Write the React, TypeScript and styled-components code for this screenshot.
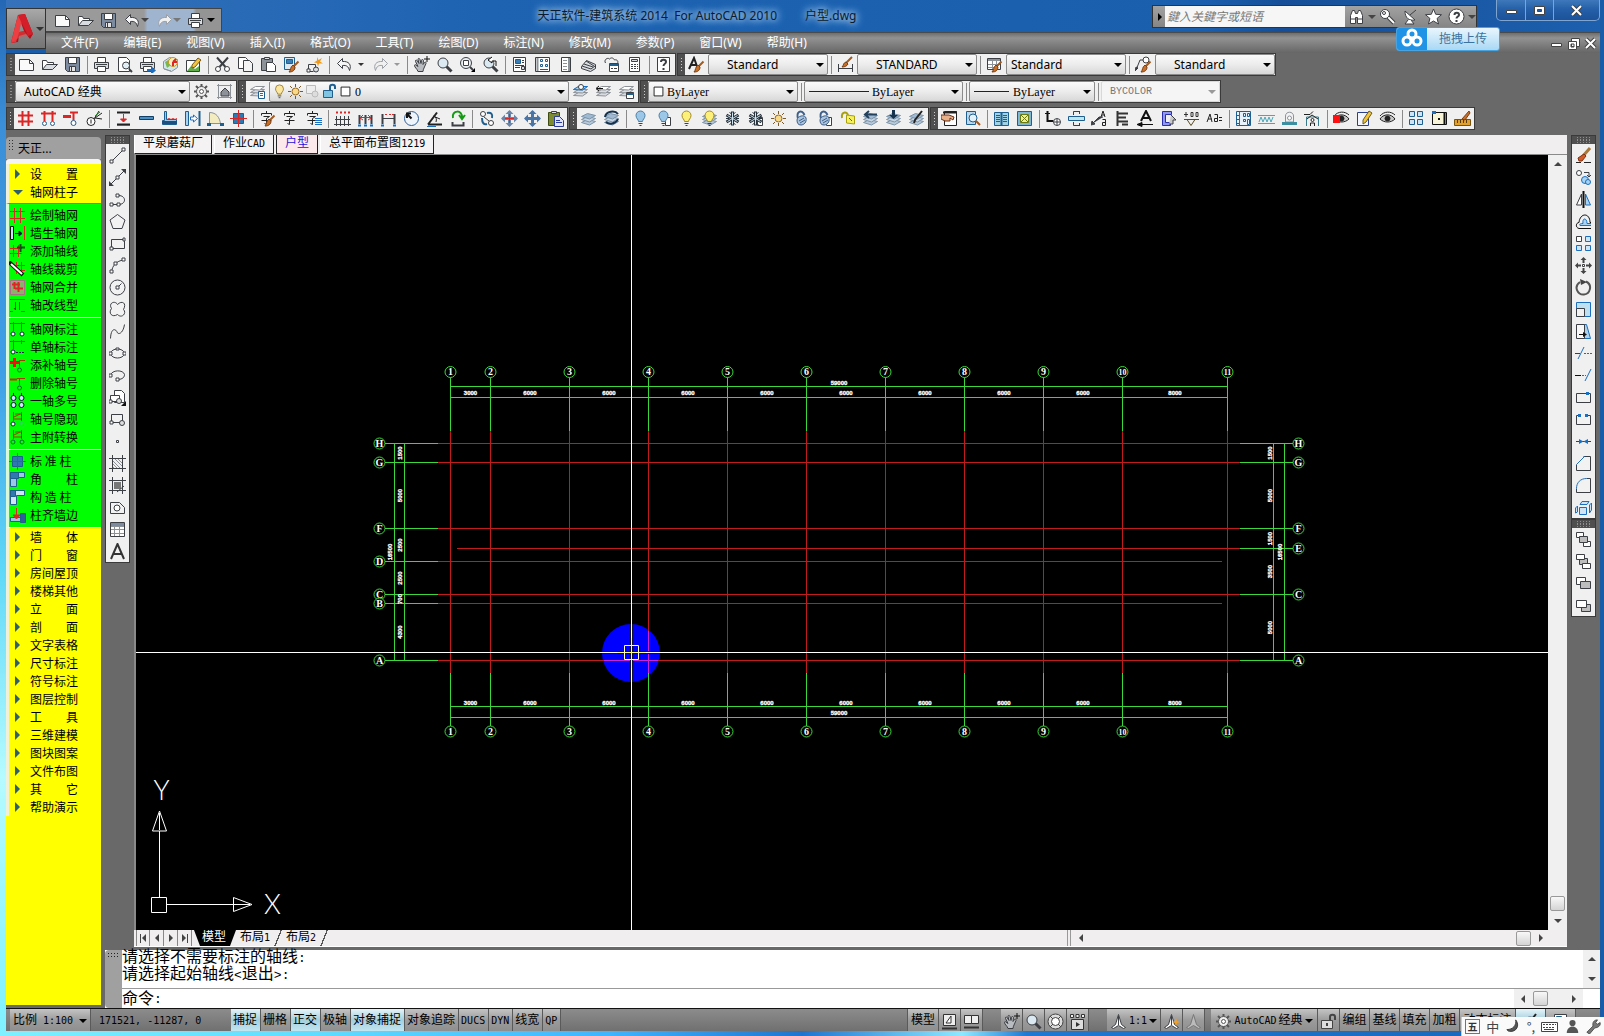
import React from 'react';
import styled, { createGlobalStyle, css } from 'styled-components';

const UI = '"Noto Sans", "Noto Sans CJK SC", sans-serif';
const SONG = '"Liberation Mono", "Noto Sans CJK SC", monospace';

const Global = createGlobalStyle`
  * { box-sizing: border-box; }
  html, body { margin: 0; height: 100%; background: #1a5aa6; }
  #root { height: 100%; }
  button, input, select { font: inherit; color: inherit; border: 0; padding: 0; margin: 0; background: none; border-radius: 0; outline: none; }
  svg { display: block; flex: none; }
`;

/* ---------- icon drawing ---------- */

type Layer = [d: string, stroke?: string, fill?: string, width?: number];

const k = '#3c3f44';
const b = '#1c6fc0';
const lb = '#a9d3f0';
const r = '#dc2626';
const g = '#159a15';
const y = '#f2c53d';
const o = '#c8702a';
const m = '#8d9299';
const w = '#ffffff';
const n = 'none';
const nav = '#1f5f8f';
const lt = '#d9dde2';

const C = (x: number, cy: number, q: number) => `M${x - q} ${cy}a${q} ${q} 0 1 0 ${2 * q} 0a${q} ${q} 0 1 0 ${-2 * q} 0z`;
const Q = (x: number, ry: number, wd: number, h: number) => `M${x} ${ry}h${wd}v${h}h${-wd}z`;

const brush: Layer[] = [['M15.5 5.5l-5 5', '#a05a20', n, 2], ['M10 9l2 2c0 3-2 5-6 5 2-2 1-5 4-7z', '#7a3f12', o]];
const layers: Layer[] = [
  ['M1.5 12.5l5-3h9l-5 3.5z', m, lt],
  ['M1.5 9.5l5-3h9l-5 3.5z', m, lt],
  ['M1.5 6.5l5-3h9l-5 3.5z', m, w],
];
const blueLayers: Layer[] = [
  ['M1.5 12.5l6-3 8 2-6 3.5z', '#7c93a8', '#b9cbdb'],
  ['M1.5 9.5l6-3 8 2-6 3.5z', '#7c93a8', '#c6d6e4'],
  ['M1.5 6.5l6-3 8 2-6 3.5z', '#7c93a8', '#9fbad2'],
];
const printer: Layer[] = [['M4.5 6.5v-5h8v5', k, w], ['M1.5 6.5h14v6h-14z', k, lt], [Q(4.5, 10.5, 8, 5), k, w], ['M3 8.5h11', k]];
const bulb = (f: string, s: string): Layer[] => [['M6.5 11.5c0-2-2.500-3-2.500-6a4.500 4.500 0 0 1 9 0c0 3-2.500 4-2.500 6z', s, f], ['M6.500 13.500h4M7.500 15.500h2', k]];
const flake: Layer[] = [['M8.500 1.500v14M2.500 5l12 7M14.500 5l-12 7', '#27323d', n, 3], ['M5.500 2.500l3 2 3-2M5.500 14.500l3-2 3 2M2 8.500h3M12 8.500h3', '#27323d'], ['M8.500 2.500v12M3.500 5.500l10 6M13.500 5.500l-10 6', '#cfe6f2']];
const sun: Layer[] = [[C(8.5, 8.5, 3.500), '#9a6a20', '#f7d98a'], ['M8.500 1v3M8.500 13v3M1 8.500h3M13 8.500h3M3 3l2 2M12 12l2 2M14 3l-2 2M5 12l-2 2', '#7a5a2a']];
const lock = (f: string): Layer[] => [['M5.500 10C2 1 9-1 11.500 5', '#3e5f8a', n, 2], ['M4 10c0-4 8-6 9-2 1 4-2 7-5 7s-4-2-4-5z', '#3e5f8a', f], ['M6 11l5-3M7 13l5-3', '#3e5f8a']];
const sheet: Layer[] = [[Q(10.5, 7.5, 5, 8), k, w]];
const axisCol: Layer[] = [[Q(3.5, 3.5, 10, 10), nav, '#2f78b0'], ['M8.500 0v17M0 8.500h17', r]];
const grid: Layer[] = [['M5.500 1v15M11.500 1v15M1 5.500h15M1 11.500h15', r, n, 2]];
const move = (c: string): Layer[] => [['M8.500 1.500v14M1.500 8.500h14', c, n, 3], ['M8.500 0l4 4h-8zM8.500 17l4-4h-8zM0 8.500l4-4v8zM17 8.500l-4-4v8z', n, c]];
const zi: Layer[] = [['M7.500 1v2M2.500 5.500v-2h10v2M4.500 6.500h6l-3 2v6l-2-1M2.500 10.500h10', '#222']];
const hand: Layer[] = [['M5 15.500c-1-3-3.500-4-3.500-6 0-1 1-1 1.500-.5l2 1.500-2.500-5c-.5-1.500 1-2 1.500-1l2 3-1-4c0-1.500 1.500-1.500 2 0l1 4 .5-3c0-1.500 2-1 2 0l-.5 4 1.500-2c1-1 2 0 1.500 1l-2 4.500c-.5 1.500-1 2-1 3.500z', k, '#b9bcc0'], ['M14 0v6M11 3h6', '#111']];
const lens: Layer[] = [['M10.500 10.500l5 5', k, n, 3], [C(7, 7, 5), k, '#dbe9f2']];
const gear: Layer[] = [['M8.500 1v3M8.500 13v3M1 8.500h3M13 8.500h3M3 3l2 2M12 12l2 2M14 3l-2 2M5 12l-2 2', '#555', n, 2], [C(8.5, 8.5, 5), '#555', '#eee'], [C(8.5, 8.5, 2), '#555', w]];
const person: Layer[] = [['M8.500 1.500l3 10 4 3-2 1-5-3-5 3-2-1 4-3z', k, w], ['M8.500 3v9', k]];
const eye: Layer[] = [['M1 9c3-5 11-6 15 0-4 4-11 4-15 0z', '#222', '#c9c9c9'], [C(8.5, 8.5, 2.500), '#222', '#222'], ['M1 6c4-5 11-5 15-1', '#222']];

const ICONS: Record<string, Layer[]> = {
  new: [['M1.500 3.500h10l4 4v7h-14z', k, '#fafafa'], ['M11.500 3.500v4h4', k]],
  open: [['M1.500 13.500v-9h4l1 2h6v2', k, w], ['M1.500 13.500l4-5h11l-5 5z', k, lt]],
  save: [['M1.500 1.500h14v14h-12l-2-2z', k, '#7d8ba0'], [Q(4.5, 1.500, 8, 6), k, w], [Q(5.5, 10.5, 6, 5), k, '#e6e6e6'], ['M7.500 11v4', k]],
  print: printer,
  preview: [['M2.500 1.500h8l3 3v11h-11z', k, w], ['M13 13l3 3', k, n, 2], [C(10, 9.5, 3.500), k, '#e3eef5']],
  publish: [...printer, ['M8 13h4v-3l5 4.500-5 4v-3H8z', n, b]],
  globe: [['M1.500 5.500l6-4 8 2v8l-6 4-8-3z', m, '#cfe6ee'], ['M3 6l5-3 1 6-4 3z', n, '#78b84f'], [C(11, 6, 4.5), '#c9951c', '#f8efc5'], ['M11 6l3-3M11 6h4M11 6v4', r, n, 2], ['M2 13l7 2', m]],
  markup: [[Q(1.5, 4.5, 13, 11), k, w], ['M2 15l4-5 4 3 4-3v5z', n, '#5fae4a'], ['M7 9l6-7 3 2-6 7-3 1z', '#7a5a1a', y]],
  cut: [['M3 1.500l8.500 9.500M14 1.500L5.500 11', k, n, 2], [C(4, 13, 2.500), k, w], [C(13, 13, 2.500), k, w]],
  copy: [['M1.500 1.500h7l2 2v9h-9z', k, w], ['M6.500 4.500h6l3 3v8h-9z', k, '#f4f4f4']],
  paste: [[Q(1.5, 2.5, 11, 12), k, '#8d9299'], [Q(4.5, 1.500, 5, 2), k, lt], ['M6.500 6.500h6l3 3v6h-9z', k, w]],
  match: [[Q(1.5, 1.500, 10, 12), nav, '#dce8f2'], [Q(3.5, 3.5, 6, 4), nav, '#3b7db5'], ...brush],
  blockEdit: [['M2.500 8.500h7v4M2.500 8.500v7h5', k], [C(10, 13.5, 2.500), k, lt], [Q(1, 13, 3, 3), k, w], ['M11 1l1.500 3L16 2l-2 3.500 3 2h-4l-1 3-1-3.500-3-.5 3-2z', n, '#f09a1a']],
  undo: [['M6.500 2.500l-5 5 5 5v-3c4-.5 6 1 7 5 2.500-6-1-9.500-7-9z', k, '#f6f6f6']],
  redo: [['M10.500 2.500l5 5-5 5v-3c-4-.5-6 1-7 5-2.500-6 1-9.500 7-9z', '#9aa0a6', '#f0f0f0']],
  pan: hand,
  zoom: lens,
  zoomWin: [[C(7, 7, 5.500), k, '#e9eef2'], [Q(4.5, 4.5, 5, 5), k, w], ['M11 11l3 3', k, n, 2], ['M16 12v4h-4z', n, '#000']],
  zoomPrev: [...lens, ['M10 1l-4 3 4 3v-2h4v5', '#111', w]],
  props: [[Q(2.5, 1.500, 12, 14), k, w], [Q(4.5, 3.5, 5, 4), nav, '#3b7db5'], ['M11 4.500h2M11 6.500h2M4 9.500h9M4 11.500h5', k], [Q(10.500, 10.5, 3, 3), k, lt]],
  design: [[Q(1.5, 1.500, 14, 14), k, w], ['M3.500 2v13', m, n, 2], ['M6.500 3.500h2v2h-2zM11.500 3.500h2v2h-2zM6.500 8.500h2v2h-2zM11.500 8.500h2v2h-2zM6 13.500h8', nav]],
  toolPal: [[Q(4.5, 1.500, 9, 14), k, w], ['M12 2v13', m, n, 2], ['M6 4.500h4M6 7.500h4M6 10.500h4M6 13.500h4', m]],
  sheetSet: [['M1.500 10.500l5-6 9 4v4l-5 3-9-3z', k, lt], ['M2 10l9 3 4-3M4 8l9 3M6 5l8 5', k]],
  markupSet: [['M2.500 7c-2-3 2-6 4-4 2-2 4-1 5 1 3-1 4 2 3 3', k], [Q(6.5, 7.5, 9, 8), k, w], ['M6.500 9h9', nav, n, 2], ['M8 12.500h2M11 12.500h3', k]],
  calc: [[Q(3.5, 1.500, 10, 14), k, w], [Q(5.5, 3.5, 6, 2), k, lt], ['M5 8.500h2M8 8.500h2M11 8.500h1M5 10.500h2M8 10.500h2M11 10.500h1M5 12.500h2M8 12.500h2M11 12.500h1', k]],
  help: [[Q(2.5, 1.500, 12, 14), k, w], ['M6 6c0-3 5-3 5 0 0 2-2.500 1.500-2.500 4M8.500 12v2', k, n, 2]],
  textStyle: [['M1 13L6 2l4 11M3 9h6', '#222', n, 2], ...brush],
  dimStyle: [['M1.500 8v8M15.500 8v8M2 12.500h13', k], ['M15 1l-6 6', '#a05a20', n, 2], ['M9 6l2 2c-1 2-3 3-6 3 2-2 1-4 4-5z', '#7a3f12', o]],
  tableStyle: [[Q(1.5, 2.5, 13, 11), k, w], ['M2 4h12', m, n, 2], ['M2 8.500h12M2 11.500h8M6.500 5v8M10.500 5v8', m], ...brush],
  leaderStyle: [['M1 14l4-10h4', k], ['M0 15l1-4 2 1z', k, k], [C(11, 4, 3), k, w], ...brush],
  gear,
  wsSettings: [['M2.500 1v15M14.500 1v15M1 2.500h15M1 14.500h15', m], ['M5 13V9l4-4 4 4v4z', k, m]],
  layerProps: [...layers, [Q(9.5, 8.5, 6, 7), nav, w], ['M11 10.500h3M11 12.500h3', b]],
  layerCur: [...layers, ['M1.500 6.500l5-3h9l-5 3.500z', b, lb], [C(9, 4, 2.500), k, w]],
  layerPrev: [...layers, ['M8 5.500H2M4 3L1 5.500 4 8', '#111', n]],
  layerState: [...layers, [Q(8.5, 9.5, 7, 6), k, w], ['M9 11h7', nav, n, 2]],
  bulb: bulb('#fbe6a0', '#9a7a2a'),
  sun,
  vpFreeze: [[Q(2.5, 2.5, 9, 8), '#bbb', '#eee'], [C(11, 11, 3), '#bbb', '#ddd']],
  unlock: [['M9 7V4c0-3 5-3 5 0v2', nav, n, 2], [Q(2.5, 7.5, 9, 7), nav, '#7fc4e0']],
  swatch: [[Q(3.5, 3.5, 10, 10), '#111', w]],
  grid,
  axisDim: [['M4.500 1v10M12.500 1v10M1 3.500h15', r, n, 2], [C(4.5, 13.5, 2), nav, w], [C(12.5, 13.5, 2), nav, w]],
  axisDel: [['M0 6.500h8', r, n, 3], ['M7 2.500h8M10.500 2.500v8', r, n, 2], [C(10.5, 13, 2.500), nav, w]],
  axisNo: [[C(5, 11.500, 4), '#222', w], ['M5 9.500v4M9 8l7-5M9 8l7 1M8 9L13 1', '#222'], ['M9 6l5-4', g]],
  wallH: [['M2 2.500h13M2 14.500h13', '#222', n, 2], ['M8.500 4v6M8.500 12l-3-3h6z', r, r], ['M2 15.500h13', b]],
  wallLine: [[Q(1.5, 6.5, 14, 3), '#123f66', '#4a8ec2']],
  wallL: [['M5.500 1.500v8h10v5h-14v-4h2v-9z', nav, '#9cc7e6'], ['M1 12.500h15', '#1f4f7f', n, 3], ['M6 9.500l2-1 2 1 2-1 2 1 2-1', r]],
  wallGap: [[Q(1.5, 1.500, 3, 14), nav, lb], ['M15.500 1v15', nav, n, 2], ['M6.500 7h3V5l4 3.500-4 3.500v-2h-3z', b, w]],
  door: [['M2.500 13.500v-11c7 0 10 5 11 11z', m, '#f2ecc0'], ['M0 14.500h4M13 14.500h4', nav, n, 3]],
  column: axisCol,
  ziBrush: [...zi, ...brush],
  zi,
  ziLines: [...zi, ['M10 8.500h7M10 10.500h7M10 12.500h7M10 14.500h7', b]],
  dim1: [['M2.500 6v10M6.500 6v10M10.500 6v10M14.500 6v10M1 9.500h15M0 14.500h17', k], ['M2 2.500h2M6 2.500h2M10 2.500h2M14 2.500h2', r, n, 2]],
  dim2: [['M2.500 5v9M8.500 5v9M14.500 5v9', k, n, 2], ['M4 7.500h9M11 5l3 3-3 2M6 5L3 8l3 2', r], ['M1 15.500h3M7 15.500h3M13 15.500h3', b, n, 2]],
  dim3: [['M2.500 4v10M14.500 4v10', k, n, 2], ['M5 4.500h2M9 4.500h2M12 4.500h2', r], ['M2 8.500h13', k], ['M1 15.500h3M13 15.500h3', b, n, 2]],
  radius: [[C(8.5, 8.5, 7), '#2f5f96', '#eef4fa'], ['M8.500 8.500l-4-4M8 3.500H4V8', '#111', n, 2]],
  angle: [['M2 14.500h14M2 14.500L11 2.500', '#222', n, 2], ['M7 6l7 3M10 12c1-3 0-5-2-6', '#222'], ['M1 16.500h9', b]],
  arcDim: [['M2.500 15.500h13M3.500 12v4M14.500 12v4', k, n, 2], ['M4 8c-2-8 10-9 9 0M10 5l3 4 3-4', g, n, 2]],
  replace: [[C(5, 4, 2.500), k, w], [C(13, 13, 2.500), k, w], ['M9 3c4-1 6 1 5 5M4 8c0 5 2 7 5 6', nav, n, 2], ['M6 7l5 4', k]],
  moveRed: [...move('#6b86a8'), ['M4 8.500h9M8.500 4v9', r]],
  moveBlue: move('#4a74a4'),
  pasteBlue: [[Q(1.5, 2.5, 11, 13), '#3f4a14', '#7c8a30'], [Q(4.5, 1.500, 5, 2), k, lt], ['M7.500 6.500h5l4 4v6h-9z', '#2a3a9a', '#dfe4fb'], ['M9 10.500h4M9 12.500h6', '#2a3a9a']],
  lay: blueLayers,
  layCycle: [...blueLayers, ['M2 7c1-6 10-7 13-3M15 9c-2 5-9 6-12 3', '#16324d', n, 2]],
  bulbOff: bulb('#9cc7e6', '#4a7fa6'),
  bulbSheet: [...sheet, ...bulb('#9cc7e6', '#4a7fa6')],
  bulbOn: bulb('#fdf07a', '#a58a20'),
  bulbAll: [...blueLayers, ...bulb('#fdf07a', '#a58a20')],
  flake,
  flakeSheet: [...sheet, ...flake],
  lockB: lock('#a9c4dc'),
  lockSheet: [...sheet, ...lock('#a9c4dc')],
  lockY: [['M3 8C2 1 9 1 9 6', '#a8a010', n, 2], ['M7.500 5l8 1v8l-8-1z', '#a8a010', '#f5f060'], ['M10 8l3 3', '#6a6410']],
  layPrev: [...blueLayers, ['M15 4.500H4M7 1L3 4.500 7 8', '#23405c', n, 2]],
  layDown: [...blueLayers, ['M8.500 0v5', '#16324d', n, 3], ['M8.500 9L4 5h9z', n, '#16324d']],
  layEdit: [...blueLayers, ['M14 1L7 10l-1 3', '#222', y, 2]],
  handCard: [[Q(3.5, 1.500, 12, 14), '#222', w], ['M2 2.500h14', '#222', n, 2], ['M0 5h8l5 2-1 3-3-2v3H4L0 9z', '#6b2c10', '#e8b088']],
  findDoc: [['M2.500 1.500h9v13h-9z', nav, '#bcd6ea'], [C(9, 8, 4), nav, '#e3f1fa'], ['M12 11l4 4', '#a05a20', n, 2]],
  win1: [[Q(1.5, 2.5, 14, 13), nav, '#9fd2e4'], ['M8.500 2v14', nav, n, 2], ['M3 5.500h4M3 7.500h4M3 9.500h4M3 11.500h4M10 5.500h4M10 7.500h4M10 9.500h4M10 11.500h4', nav]],
  win2: [[Q(1.5, 1.500, 14, 14), nav, '#7fb6d8'], [Q(4.5, 4.5, 8, 8), '#6a7a10', '#f0ee90'], ['M5 5l7 7M12 5l-7 7', '#6a7a10']],
  leaderC: [['M2.500 1v10h6', '#111', n, 2], ['M0 3.500h5', '#111'], [C(12, 12, 3.500), k, w], ['M9 12h6M12 9v6', k]],
  leaderBox: [['M5.500 5V1.500h6M5.500 12v3.500h6', k], ['M11.500 1v3M11.500 13v3', k], [Q(0.5, 6.5, 16, 4), nav, '#bfe6ea']],
  leaderAB: [['M1 14l7-7h4M0 15l1-4 3 3z', k, k], ['M10 7l2-6 2 6M11 5h3M11.500 9.500h3v6h-3v-3h3', '#222']],
  level: [['M3.500 1v15M4 3.500h10M4 7.500h8M4 11.500h10M8 14.500h6', '#333', n, 2]],
  arrowA: [['M4 11L9 1l5 10M6 8h6', '#111', n, 2], ['M3 14.500h13', '#111', n, 1], ['M0 14.500l5-2v4z', '#111', '#111']],
  section: [['M2.500 1.500h9v3h-6v8h5v3h-8z', '#2a2fa8', '#8f98ee'], ['M11 5l5 5h-3v4h-4', k, '#c9c9c9']],
  elev: [['M1 4.500h4M3 2v5M8 2.500h2v4H8zM13 2.500h2v4h-2z', '#333'], ['M1 9.500h15M4 9.500l4 6 4-6', '#5a4a20']],
  abText: [['M1 12l3-8 2 8M2 9h4', '#222', n], ['M8.500 4.500h3v7h-3v-3h3M13 7.500h3M13 10.500h3', '#222', n]],
  plan: [[Q(1.5, 1.500, 14, 14), nav, '#e8f2fa'], ['M4.500 2v13', b, n, 1], ['M8.500 3.500h2v3h-2zM12.500 3.500h2v3h-2zM8.500 9.500h2v2h-2zM12.500 9.500h2v5h-2zM2 5.500h2M2 9.500h2M2 13.500h2', nav]],
  hatch: [['M0 5.500h17M0 13.500h17', '#48a8b8'], ['M1 12l2-5 2 5 2-5 2 5 2-5 2 5 2-5', '#48a8b8']],
  lampBlock: [['M4.500 12v-6c0-5 8-5 8 0v6z', m, '#f2f2f2'], ['M1 13.500h15', '#3d8ea0', n, 3], [C(8.5, 8, 2), m, w]],
  house: [['M2.500 16V7h12v9', '#3a7a8a'], ['M0 4.500h6l3-3', '#222'], ['M3 9l5-4 6 4', '#222'], [C(8.5, 10, 1.5), '#222', w], ['M6.500 16v-3h4v3', '#222']],
  eyeRed: [...eye, [Q(0, 5, 7, 8), n, '#ff1010']],
  pencil: [[Q(1.5, 2.5, 11, 13), '#2b3f8f', '#f4f6ff'], ['M13 1l3 2-6 9-3 2v-4z', '#6a5a1a', y]],
  eye,
  fourGrid: [[Q(1.5, 1.5, 5, 5), nav, '#cfe4f5'], [Q(9.5, 1.5, 5, 5), nav, '#cfe4f5'], [Q(1.5, 9.5, 5, 5), nav, '#cfe4f5'], [Q(9.5, 9.5, 5, 5), nav, '#cfe4f5']],
  frame: [[Q(1.5, 2.5, 14, 12), '#111', '#f8f4d8'], ['M13.500 3v11', '#111', n, 2], [Q(7, 8, 2, 2), n, '#111'], ['M1 2.500h4', b, n, 3]],
  ruler: [['M0.500 9.500h16v6h-16z', '#7a5510', '#e0a030'], ['M3.500 10v3M6.500 10v3M9.500 10v3M12.500 10v3', '#5a3a08'], ['M8 9l7-8 1 2-5 7z', '#7a3f12', o]],
  line: [['M2.500 14.500l12-12', k], [Q(1, 13, 3, 3), k, w], [Q(13, 1, 3, 3), k, w]],
  xline: [['M2 15L15 2', k], ['M0 17v-5l5 5zM17 0v5l-5-5z', n, k], [Q(7, 7, 3, 3), k, w]],
  pline: [['M2.500 13.500h7c8 0 8-9 0-9', k], [Q(1, 12, 3, 3), k, w], [Q(8, 12, 3, 3), k, w], [Q(7, 3, 3, 3), k, w]],
  polygon: [['M8.500 1.500l7.500 5.500-3 8.500H4L1 7z', k, '#f2f2f2']],
  rect: [[Q(2.5, 4.5, 13, 9), k, '#f2f2f2'], [Q(1, 12, 3, 3), k, w], [Q(14, 3, 2, 3), k, w]],
  arc: [['M2.500 15c1-7 5-11 12-12', k], [Q(1, 13, 3, 3), k, w], [Q(5, 5, 3, 3), k, w], [Q(13, 1, 3, 3), k, w]],
  circle: [[C(8.5, 8.5, 7.500), k, '#f2f2f2'], ['M8.500 8.500l4-4', k], [Q(7, 7, 3, 3), k, w]],
  cloud: [['M8.500 3.500C6-1-1 2 2.500 7.500-1 12 3 17 8.500 13.500 13 18 18 12 14.500 8.500 18 2 13-1 8.500 3.500z', k, '#f2f2f2']],
  spline: [['M1.500 15.500C2 4 7 6 8 9s6 2 7.500-7.500', k]],
  ellipse: [['M1.500 8.500c1-6 13-6 14 0-1 6-13 6-14 0z', k, '#f2f2f2'], [Q(0, 7, 3, 3), k, w], [Q(14, 7, 3, 3), k, w], [Q(7, 3, 3, 2), k, w]],
  ellArc: [['M1.500 8.500c1-6 13-6 14-1 0 4-4 5-7 5', k], [Q(0, 7, 3, 3), k, w], [Q(7, 11, 3, 3), k, w]],
  insert: [['M5.500 1.500h7l3 3v9h-10z', k, w], [Q(1.5, 6.5, 9, 6), k, w], [Q(0, 11, 3, 3), k, w], [C(10, 12, 2.500), k, '#ddd'], ['M17 12v5h-5z', n, '#111']],
  block: [[Q(2.5, 3.5, 11, 8), k, '#f2f2f2'], [Q(1, 10, 3, 3), k, w], [C(13, 12, 2.500), k, '#ddd']],
  point: [[Q(7.5, 7.5, 2, 2), k, w]],
  hatchT: [['M3.500 0v17M13.500 0v17M0 3.500h17M0 13.500h17', k], ['M4 6l7 7M4 9l4 4M6 4l7 7M9 4l4 4M4 12l1 1', m]],
  gradT: [['M3.500 0v17M13.500 0v17M0 3.500h17M0 13.500h17', k], [Q(5, 5, 7, 7), n, '#777'], ['M8 15l7-6', k]],
  region: [['M1.500 14.500v-11h9l5 5v6z', k, '#f2f2f2'], [C(8, 9, 3), k, w]],
  table: [[Q(1.5, 1.500, 14, 14), k, w], [Q(2, 2, 13, 3), n, '#7c8ba0'], ['M2 5.500h13M2 8.500h13M2 12.500h13M5.500 5v10M10.500 5v10', m]],
  bigA: [['M2 16L8.500 1 15 16M4.500 11h8', '#333', n, 2]],
  erase: [['M15 1L8 9', '#a87838', n, 3], ['M9 7l2 2-4 5-3 0-1-3z', '#803010', '#d05a28'], ['M1 15.500h5M9 15.500h7', '#222']],
  copyM: [[C(4, 4, 2.500), k, w], ['M9 3.500h5v4M12 6l2 2 2-2', k], [C(10, 11, 3.500), b, lb], [C(13, 13, 2.500), b, lb]],
  mirror: [['M6.500 3v11h-5z', k, w], ['M8.500 0v17', '#111', n, 2], ['M10.500 3v11h5z', b, lb]],
  offset: [['M16 15.500H4c-4-1-3-6 0-6 1-10 11-10 11 0h1', '#111', n], ['M16 12.500H5c-1-1 0-2 3-2-1-6 4-6 4 0h4', b, lb]],
  array: [[Q(1.5, 1.500, 5, 5), k, w], [Q(10.5, 1.500, 5, 5), b, '#cfe4f5'], [Q(1.5, 10.5, 5, 5), b, '#cfe4f5'], [Q(10.5, 10.5, 5, 5), b, '#cfe4f5']],
  moveT: [['M8.500 0l3 3h-2v3h-2V3h-2zM8.500 17l3-3h-2v-3h-2v3h-2zM0 8.500l3-3v2h3v2H3v2zM17 8.500l-3-3v2h-3v2h3v2z', n, '#444'], [Q(7.500, 7.5, 2, 2), k, w]],
  rotate: [['M5 3C-2 8 3 16 9 15.500S18 6 11 2.500', '#555', n, 2], ['M5 0l7 3-6 3z', n, '#444']],
  scale: [[Q(1.5, 1.500, 14, 14), b, '#bfe0f0'], [Q(1.5, 7.5, 8, 8), k, '#f2f2f2']],
  stretch: [['M9 1.500h2.500l4 14H9z', b, lb], [Q(1.500, 1.500, 8, 14), k, '#f8f8f8'], ['M4 11.500h5', '#111'], ['M8 9l4 2.500L8 14z', n, '#111']],
  trim: [['M0 8.500h5', k, n], ['M3 14L9 2', b], ['M9 8.500h2M12 8.500h2M15 8.500h2', b]],
  extend: [['M0 8.500h6', '#111', n], ['M7 8.500h2M10 8.500h1', b], ['M10 14l6-12', b]],
  breakPt: [[Q(1.5, 4.5, 14, 9), k, '#f2f2f2'], [Q(11, 3, 3, 3), n, b]],
  breakT: [['M4 4.500H1.500v9h14v-9H13', k, '#f2f2f2'], [Q(3, 3, 3, 3), n, b], [Q(10, 3, 3, 3), n, b]],
  join: [['M1 8.500h15', k], ['M4 6l4.500 2.500L4 11zM13 6L8.500 8.500 13 11z', n, b]],
  chamfer: [['M8.500 1.500h7v14h-14v-6', k, '#f2f2f2'], ['M1.500 9.500l8-8', b]],
  fillet: [['M11.500 1.500h4v14h-14v-4', k, '#f2f2f2'], ['M1.500 11.500c0-6 4-10 10-10', b]],
  explode: [['M4.500 8.500h7v7h-7zM2.500 7l-2 2v5l2-1zM5 5.500l2-3h7l-2 3zM14.500 6l2-2v7l-2 3z', b, '#cfe4f5']],
  order1: [[Q(1.5, 1.500, 7, 5), k, w], [Q(8.5, 10.5, 7, 5), k, w], [Q(4.5, 5.5, 8, 6), k, '#bdbdbd']],
  order2: [[Q(4.5, 5.5, 8, 6), k, '#bdbdbd'], [Q(1.5, 1.500, 8, 5), k, w], [Q(7.5, 10.5, 8, 5), k, w]],
  order3: [[Q(1.5, 2.5, 9, 7), k, w], [Q(5.5, 6.5, 10, 7), k, '#bdbdbd']],
  order4: [[Q(6.5, 7.5, 9, 7), k, '#bdbdbd'], [Q(1.5, 3.5, 10, 7), k, w]],
  pGrid: [['M5.500 1v15M11.500 1v15M1 4.500h15M1 11.500h15', r]],
  pWall: [[Q(1.5, 1.500, 3, 13), '#111', '#bfe0ff'], ['M6 8.500h5M10 6l3 2.500-3 2.500z', '#114', '#114'], ['M15.500 1v14', r]],
  pAdd: [['M4.500 2v12M9.500 2v12M1 5.500h12M1 10.500h12', r], ['M11.500 1v8M8 4.500h8', '#144d14', n, 2]],
  pTrim: [['M7.500 1v12M12.500 1v12M4 4.500h12M6 9.500h10', r], ['M0 1l14 13', '#111', n, 4], ['M2 3l11 10', w, n, 2]],
  pMerge: [[Q(1.5, 1.500, 14, 14), '#b06a8a', '#8fae6a'], ['M5.500 3v7M9.500 3v10M3 5.500h8M6 9.500h8', r, n, 2]],
  pType: [['M1 2.500h15', r], ['M6.500 5v8M10.500 5v8M5 11l1.500 2', '#3a5a00'], ['M1 14.500h3M12 14.500h4', r]],
  pDim: [['M4.500 1v9M12.500 1v9M1 2.500h15', '#a33a00'], [C(4, 13, 2), '#124', w], [C(13, 13, 2), '#124', w]],
  pDim1: [['M4.500 1v9M12.500 1v4M1 2.500h15', '#a33a00'], [C(4, 13, 2), '#124', w], ['M7 13.500h2M10 13.500h2M13 13.500h2', '#124']],
  pPlus: [['M5.500 1v9M1 5.500h9', '#f01010', n, 3], ['M10 3.500h6M10.500 3v7', '#a33a00'], [C(10.500, 13, 2), '#0a6a2a', n]],
  pMinus: [['M1 4.500h7', '#c03000', n, 2], ['M8 3.500h8M10.500 3v7', '#a33a00'], [C(10.500, 13, 2), '#0a6a2a', n]],
  pMulti: [[C(4.5, 5, 2.500), '#113', '#cfe4ff'], [C(12.5, 5, 2.500), '#113', '#cfe4ff'], [C(4.5, 12, 2.500), '#113', '#cfe4ff'], [C(12.5, 12, 2.500), '#113', '#cfe4ff'], ['M4.500 0v3M12.500 0v3', '#113']],
  pShow: [['M4.500 1v9M12.500 1v9', '#a33a00'], ['M5 6l6-3M6 3h6M5 8h7', '#a33a00'], [C(4, 13, 2), '#124', w], [C(13, 13, 2), '#3c6', n]],
  pSwap: [['M4.500 1v9M12.500 1v9', '#a33a00'], ['M5 6l6-3M6 3h6M5 8h7', '#a33a00'], [C(4, 13, 2), '#164', n], [C(13, 13, 2), '#164', n]],
  pCol: axisCol,
  pCorner: [['M1.500 1.500h14v5h-8v9h-6z', nav, '#9cc7e6'], [Q(1.5, 1.500, 8, 6), nav, '#2f78b0']],
  pCorner2: [['M1.500 1.500h14v5h-8v9h-6z', nav, '#cfe4f5'], [Q(1.5, 1.500, 5, 6), nav, '#2f78b0']],
  pAlign: [['M1.500 10.500h10v4h-10z', nav, '#9cc7e6'], [Q(11.5, 6.5, 5, 9), nav, '#2f5f96'], ['M7.500 1v8M4 8h7l-3.500 4z', r, r]],
  binoc: [['M2.500 15.500v-8l2-5h2l1 3h2l1-3h2l2 5v8h-5v-6h-2v6z', k, w], ['M3 11h4M10 11h4', k]],
  key: [['M9 9l6 6', k, n, 4], ['M9 9l6 6', w, n, 2], [C(6, 6, 4.500), k, w], [C(5, 5, 1.500), k, n]],
  dish: [['M3 3c0 7 4 10 10 9z', k, w], ['M6 12l-3 4h9l-3-4M8 7l6-5', k, w]],
  star: [['M8.500 1l2.200 5.300 5.800.4-4.400 3.700 1.400 5.600-5-3-5 3 1.400-5.600L.5 6.700l5.800-.4z', k, w]],
  qCircle: [[C(8.5, 8.5, 7.500), k, w], ['M6.500 7c0-3 4.500-3 4.500 0 0 1.500-2.500 1.500-2.500 3.500M8.500 12v2', k, n, 2]],
  sbModel: [['M2.500 1.500h12v11h-12z', '#333', '#eee'], ['M5 10l5-7v7z', '#333', w], ['M1 15.500h15', '#333', n, 2]],
  sbLayout: [[Q(1.5, 2.5, 7, 8), '#333', '#eee'], [Q(8.5, 2.5, 7, 8), '#333', '#eee'], ['M1 14.500h15', '#333', n, 2]],
  wheel: [[C(8.5, 8.5, 7.500), '#444', '#ddd'], [C(8.5, 8.5, 4), '#444', w], ['M3 3l3 3M14 3l-3 3M3 14l3-3M14 14l-3-3', '#444']],
  motion: [['M1.500 1.500h3v3h-3zM7 1.500h3v3H7zM12.500 1.500h3v3h-3z', '#333', '#eee'], [Q(2.5, 6.5, 12, 10), '#333', '#ddd'], ['M7 9l4 2.500L7 14z', n, '#333']],
  annot: person,
  annotOn: [...person, ['M13 5l1 3 3 1-3 1-1 3-1-3-3-1 3-1z', n, '#f5a020']],
  annotOff: [['M8.500 1.500l3 10 4 3-2 1-5-3-5 3-2-1 4-3z', '#777', '#bbb']],
  sbLock: [['M10 8V4c0-3 5-3 5 0v3', '#444', n, 2], [Q(1.5, 7.5, 11, 8), '#444', '#ddd'], ['M7 10v3', '#444', n, 2]],
  moon: [['M11 1c5 6 1 14-7 13-2 0-3-2-3-2 7 0 11-5 10-11z', '#333', '#555']],
  keyboard: [[Q(0.5, 4.5, 16, 9), '#444', w], ['M2 6.500h2M5 6.500h2M8 6.500h2M11 6.500h2M14 6.500h1M2 9.500h2M5 9.500h2M8 9.500h2M11 9.500h2M3 11.500h10', '#444']],
  user: [[C(8.5, 4.5, 3.500), n, '#555'], ['M2 16c0-10 13-10 13 0z', n, '#555']],
  wrench: [['M1 15l7-7c-1-4 1-7 5-7l-2 3 2 2 3-2c1 4-3 6-6 6l-6 7z', '#444', '#777']],
  wMin: [[Q(3.5, 8.5, 10, 3), '#444', w]],
  wMax: [['M3.500 4.500h10v8h-10zM6.500 7.500v2h4v-2z', '#444', w]],
  wRestore: [[Q(6.5, 3.5, 8, 8), '#444', w], ['M3.500 6.500h8v8h-8zM6 9v3h3v-3z', '#444', w]],
  wClose: [['M4 4l9 9M13 4l-9 9', '#444', n, 4], ['M4 4l9 9M13 4l-9 9', w, n, 2]],
};

function Icon({ name, size = 17 }: { name: string; size?: number }) {
  return (
    <svg width={size} height={size} viewBox="0 0 17 17" aria-hidden="true">
      {(ICONS[name] || []).map(([d, s = n, f = n, sw = 1], i) => (
        <path key={i} d={d} stroke={s} fill={f} strokeWidth={sw} fillRule="evenodd" />
      ))}
    </svg>
  );
}

/* ---------- shared parts ---------- */

const Caret = styled.span<{ $c?: string }>`
  flex: none;
  width: 0;
  height: 0;
  border: 4px solid transparent;
  border-top-color: ${(p) => p.$c || '#000'};
  border-bottom-width: 0;
`;

const IconButton = styled.button<{ $w?: number; $h?: number }>`
  display: flex;
  align-items: center;
  justify-content: center;
  flex: none;
  width: ${(p) => p.$w || 23}px;
  height: ${(p) => p.$h || 21}px;
`;

const SplitButton = styled(IconButton)`
  width: 36px;
  gap: 5px;
  ${Caret} { border-width: 3px 3px 0; }
`;

const Latin = styled.span`
  font-family: "DejaVu Sans Mono", monospace;
  font-size: 10px;
`;

/* ---------- window frame ---------- */

const Frame = styled.div`
  position: relative;
  display: flex;
  flex-direction: column;
  height: 100vh;
  min-height: 700px;
  padding: 0 4px 5px 6px;
  font: 12px/16px ${UI};
  color: #000;
  overflow: hidden;
  background:
    linear-gradient(90deg, #7ef0ff 0%, #5fdcff 20%, #3fb4ff 38%, #1f74cf 50%, #8fe8ff 60%, #1f78d2 64%, #1766b8 100%) bottom / 100% 5px no-repeat,
    linear-gradient(180deg, #2467b4 0, #3a8fd8 12%, #3f9fe6 36%, #5fd8f8 55%, #b5fbff 75%, #7ef0ff 100%) left / 6px 100% no-repeat,
    #1a5ca8;
`;

const Header = styled.header`
  display: grid;
  grid-template: 32px 21px / 40px 1fr;
  background: linear-gradient(90deg, #3672bb 0%, #1d63b2 30%, #1a5fae 75%, #164f98 80%, #1d60ae 100%) top / 100% 32px no-repeat;
`;

const Logo = styled.button`
  grid-row: 1 / 3;
  display: flex;
  align-items: center;
  gap: 2px;
  margin-top: 8px;
  padding-left: 2px;
  margin-bottom: 4px;
  border: 1px solid #333;
  background: linear-gradient(#a9a9a9, #8a8a8a 50%, #757575);
`;

const TitleRow = styled.div`
  display: flex;
  align-items: flex-start;
  min-width: 0;
`;

const QuickAccess = styled.div`
  display: flex;
  align-items: center;
  height: 24px;
  margin-top: 8px;
  padding-left: 5px;
  width: 176px;
  border: 1px solid #444;
  border-left: 0;
  background: linear-gradient(90deg, #9a9a9a 0 56%, #9fb4cf 58% 84%, #949494 86%);
`;

const Title = styled.h1`
  flex: 1;
  margin: 8px 0 0;
  padding-left: 20px;
  font: 12px/16px ${UI};
  text-align: center;
  white-space: pre;
  color: #0b1a2c;
  text-shadow: 0 0 6px #b8d4f0, 0 0 8px #9cc4ea, 0 0 10px #9cc4ea;
`;

const Search = styled.div`
  display: flex;
  align-items: center;
  margin-top: 5px;
  height: 23px;
  border: 1px solid #333;
  background: linear-gradient(#a2a2a2, #858585);
`;

const SearchArrow = styled.span`
  width: 0;
  margin: 0 3px 0 5px;
  border: 4px solid transparent;
  border-left-color: #000;
  border-right-width: 0;
`;

const SearchInput = styled.input`
  width: 180px;
  height: 21px;
  padding: 0 2px;
  background: #f6f6f6;
  font-style: italic;
  &::placeholder { color: #777; }
`;

const WinButtons = styled.div`
  display: flex;
  height: 21px;
  margin-left: 19px;
  border: 1px solid #7fa4cf;
  border-top: 0;
  border-radius: 0 0 5px 5px;
  background: linear-gradient(#3f78bb, #2560a8 45%, #1c5299);
  button + button { border-left: 1px solid #7fa4cf; }
`;

const MenuRow = styled.div`
  display: flex;
  align-items: center;
  padding: 0 1px 0 15px;
  border-top: 1px solid #4a4a4a;
  background: linear-gradient(#6e6e6e, #929292 25%, #666);
`;

const Menu = styled.nav`
  display: flex;
  flex: 1;
  gap: 25px;
  color: #fff;
  button { line-height: 16px; white-space: nowrap; }
`;

/* ---------- toolbars ---------- */

const ToolRows = styled.div`
  display: flex;
  flex-direction: column;
  gap: 4px;
  padding-bottom: 5px;
  background: #696969;
`;

const ToolRow = styled.div`
  display: flex;
  gap: 1px;
`;

const Bar = styled.div`
  display: flex;
  align-items: center;
  height: 23px;
  border: 1px solid #3a3a3a;
  background: #f0f0f0;
`;

const Grip = styled.span<{ $across?: boolean; $wide?: boolean }>`
  flex: none;
  align-self: stretch;
  background: radial-gradient(circle, #ccc 0 0.7px, transparent 1px) center / 3px 3px content-box, #4f4f4f;
  ${(p) => (p.$across
    ? css`height: 8px; padding: 1px 4px;`
    : css`width: ${p.$wide ? 8 : 7}px; padding: 4px 2px;`)}
`;

const Sep = styled.span`
  flex: none;
  width: 6px;
  height: 18px;
  background: linear-gradient(#8a8a8a, #8a8a8a) center / 1px 100% no-repeat;
`;

const Combo = styled.label<{ $w: number; $off?: boolean }>`
  display: grid;
  grid-template-columns: 1fr 14px;
  align-items: center;
  flex: none;
  width: ${(p) => p.$w}px;
  height: 21px;
  border: 1px solid ${(p) => (p.$off ? '#d8d8d8' : '#8b8b8b')};
  border-radius: 2px;
  background: ${(p) => (p.$off ? '#f5f5f5' : 'linear-gradient(#fafafa, #ececec 50%, #d8d8d8)')};
  > span:last-child { grid-area: 1 / 2; justify-self: center; }
`;

const ComboSelect = styled.select<{ $pad: number; $font?: 'serif' | 'mono'; $off?: boolean }>`
  grid-area: 1 / 1 / 2 / 3;
  appearance: none;
  width: 100%;
  height: 19px;
  padding-left: ${(p) => p.$pad}px;
  color: ${(p) => (p.$off ? '#777' : '#000')};
  opacity: 1;
  ${(p) => p.$font === 'serif' && css`font-family: "Liberation Serif", serif;`}
  ${(p) => p.$font === 'mono' && css`font: 10px/14px "Liberation Mono", monospace;`}
`;

const ComboArt = styled.span`
  grid-area: 1 / 1;
  display: flex;
  align-items: center;
  padding-left: 2px;
  pointer-events: none;
`;

const LineSample = styled.i<{ $w: number }>`
  width: ${(p) => p.$w}px;
  margin-left: 2px;
  border-top: 1px solid #222;
`;

interface SelectProps { label: string; value: string; w: number; pad?: number; font?: 'serif' | 'mono'; off?: boolean; children?: React.ReactNode }

function Select({ label, value, w: width, pad = 6, font, off, children }: SelectProps) {
  return (
    <Combo $w={width} $off={off}>
      <ComboSelect aria-label={label} $pad={pad} $font={font} $off={off} disabled={off}>
        <option>{value}</option>
      </ComboSelect>
      {children && <ComboArt>{children}</ComboArt>}
      <Caret $c={off ? '#999' : '#000'} />
    </Combo>
  );
}

function Tools({ names }: { names: string }) {
  return (
    <>
      {names.split(' ').map((t, i) => {
        if (t === '|') return <Sep key={i} />;
        if (t === 'undo' || t === 'redo') {
          return (
            <SplitButton key={i} aria-label={t}>
              <Icon name={t} /><Caret $c={t === 'undo' ? '#333' : '#999'} />
            </SplitButton>
          );
        }
        return <IconButton key={i} aria-label={t}><Icon name={t} /></IconButton>;
      })}
    </>
  );
}

/* ---------- body ---------- */

const Body = styled.div`
  display: flex;
  flex: 1;
  gap: 4px;
  min-height: 0;
  background: #696969;
`;

const Palette = styled.aside`
  display: flex;
  flex-direction: column;
  width: 95px;
  flex: none;
  margin: 2px 0 3px;
`;

const PaletteHead = styled.div`
  display: flex;
  gap: 5px;
  height: 22px;
  padding-left: 2px;
  border-radius: 4px 4px 0 0;
  background: #a0a0a0;
  line-height: 24px;
`;

const HeadGrip = styled.span`
  width: 5px;
  height: 12px;
  margin-top: 2px;
  background: radial-gradient(circle, #333 0 0.7px, transparent 1px) 0 0 / 3px 3px;
`;

const PaletteStrip = styled.div`
  height: 5px;
  background: #f4f4f4;
  border-radius: 3px 3px 0 0;
`;

const PaletteBody = styled.div`
  flex: 1;
  min-height: 0;
  background: #ffff00;
`;

const Group = styled.div<{ $kind: 'top' | 'green' | 'rest' }>`
  border-left: 3px solid ${(p) => (p.$kind === 'green' ? '#d8f8d8' : '#f0f0d8')};
  ${(p) => p.$kind === 'top' && css`padding: 1px 0 2px; border-bottom: 1px solid #808040;`}
  ${(p) => p.$kind === 'green' && css`padding: 2px 0 3px; border-bottom: 1px solid #e8ffe8; background: #00ff00;`}
`;

const PaletteRow = styled.button`
  display: flex;
  align-items: center;
  gap: 4px;
  width: 100%;
  height: 18px;
  white-space: pre;
  text-align: left;
  font: 12px/18px "Noto Sans CJK SC", sans-serif;
`;

const Mark = styled.span<{ $open?: boolean }>`
  display: flex;
  width: 17px;
  height: 17px;
  align-items: center;
  justify-content: center;
  &::before {
    content: '';
    border: 5px solid transparent;
    ${(p) => (p.$open
      ? css`border-top-color: #2f5f6f; border-bottom-width: 0;`
      : css`border-left-color: #2f5f6f; border-right-width: 0;`)}
  }
`;

const Work = styled.div`
  display: flex;
  flex-direction: column;
  flex: 1;
  min-width: 0;
  gap: 3px;
`;

const Upper = styled.div`
  display: flex;
  flex: 1;
  min-height: 0;
  align-items: flex-start;
  padding-right: 4px;
`;

const VColumn = styled.div`
  display: flex;
  flex-direction: column;
`;

const VBar = styled.div`
  display: flex;
  flex-direction: column;
  align-items: center;
  width: 25px;
  border: 1px solid #3a3a3a;
  background: #f0f0f0;
`;

const Doc = styled.section`
  display: flex;
  flex-direction: column;
  align-self: stretch;
  flex: 1;
  min-width: 0;
  margin: 0 4px;
  background: #f0eeee;
`;

const DocTabs = styled.div`
  display: flex;
  gap: 2px;
  height: 20px;
  border-bottom: 1px solid #8a8a8a;
`;

const DocTab = styled.button<{ $on?: boolean }>`
  padding: 0 8px;
  border-right: 1px solid #222;
  border-left: 1px solid ${(p) => (p.$on ? '#222' : '#fff')};
  border-bottom: 1px solid #222;
  background: ${(p) => (p.$on ? '#fbe9ec' : '#f4f2f2')};
  color: ${(p) => (p.$on ? '#2a10d8' : '#000')};
  font: 12px/18px ${SONG};
  white-space: nowrap;
`;

const CanvasRow = styled.div`
  display: flex;
  flex: 1;
  min-height: 0;
`;

const Canvas = styled.div`
  flex: 1;
  min-width: 0;
  border-left: 2px solid #8a8a8a;
  background: #000;
  overflow: hidden;
`;

const VScroll = styled.div<{ $w: number }>`
  display: flex;
  flex-direction: column;
  align-items: center;
  justify-content: space-between;
  flex: none;
  width: ${(p) => p.$w}px;
  padding: 7px 0;
  background: #f0f0f0;
`;

const Arrow = styled.button<{ $d: 'up' | 'down' | 'left' | 'right' }>`
  flex: none;
  width: 0;
  height: 0;
  border: 4px solid transparent;
  ${(p) => p.$d === 'up' && css`border-bottom-color: #444; border-top-width: 0;`}
  ${(p) => p.$d === 'down' && css`border-top-color: #444; border-bottom-width: 0;`}
  ${(p) => p.$d === 'left' && css`border-right-color: #444; border-left-width: 0;`}
  ${(p) => p.$d === 'right' && css`border-left-color: #444; border-right-width: 0;`}
`;

const Thumb = styled.span`
  width: 15px;
  height: 15px;
  border: 1px solid #999;
  border-radius: 2px;
  background: linear-gradient(#f8f8f8, #d4d4d4);
`;

const Stack = styled.div`
  display: flex;
  flex-direction: column;
  align-items: center;
  gap: 8px;
`;

const LayoutBar = styled.div`
  display: flex;
  align-items: stretch;
  height: 17px;
  padding-left: 2px;
  border-bottom: 1px solid #fff;
  font: 12px/16px ${SONG};
`;

const NavButton = styled.button`
  display: flex;
  align-items: center;
  justify-content: center;
  gap: 1px;
  width: 14px;
  border-right: 1px solid #888;
  &:first-child { border-left: 1px solid #888; }
`;

const Stop = styled.i`
  width: 1px;
  height: 9px;
  background: #444;
`;

const LayoutTab = styled.button<{ $on?: boolean }>`
  display: flex;
  align-items: center;
  ${(p) => (p.$on
    ? css`
      margin-left: 2px;
      padding: 0 10px 0 8px;
      color: #fff;
      background: #000;
      clip-path: polygon(0 0, 100% 0, calc(100% - 6px) 100%, 6px 100%);
    `
    : css`
      padding: 0 12px 0 4px;
      background: linear-gradient(112deg, transparent 49%, #555 49% 58%, transparent 58%) right / 9px 100% no-repeat;
    `)}
`;

const HScroll = styled.div`
  display: flex;
  align-items: center;
  gap: 8px;
`;

const HTrack = styled(HScroll)`
  flex: 0 1 500px;
  margin-left: auto;
  padding-right: 24px;
  border-left: 4px double #999;
  > :first-child { margin: 0 auto 0 8px; }
`;

const Command = styled.section`
  display: flex;
  height: 58px;
  background: #fff;
`;

const CommandGrip = styled.div`
  width: 17px;
  padding: 2px;
  border-radius: 4px 0 0 4px;
  background: #a0a0a0;
  &::before {
    content: '';
    display: block;
    height: 6px;
    background: radial-gradient(circle, #222 0 0.7px, transparent 1px) 0 0 / 3px 3px;
  }
`;

const CommandMain = styled.div`
  display: flex;
  flex-direction: column;
  flex: 1;
  font: 16px/16px ${SONG};
`;

const History = styled.div`
  display: flex;
  height: 40px;
  border-bottom: 1px solid #999;
`;

const HistoryText = styled.div`
  flex: 1;
  p { margin: 0; }
`;

const Half = styled.span`
  font-size: 13px;
`;

const PromptRow = styled.div`
  display: flex;
  flex: 1;
  align-items: center;
`;

const Prompt = styled.label`
  display: flex;
  flex: 1;
  align-items: center;
  padding-top: 3px;
  input { flex: 1; height: 15px; }
`;

const PromptScroll = styled(HScroll)`
  align-self: stretch;
  width: 69px;
  margin-right: 17px;
  padding: 0 7px;
  background: #f0f0f0;
  > :last-child { margin-left: auto; }
`;

/* ---------- status bar ---------- */

const Status = styled.footer`
  display: flex;
  height: 23px;
  padding-left: 4px;
  border-top: 1px solid #111;
  background: linear-gradient(#8c8c8c, #707070);
  font: 12px/20px ${SONG};
  white-space: nowrap;
  overflow: hidden;
`;

const StatusButton = styled.button<{ $on?: boolean; $w?: number }>`
  display: flex;
  align-items: center;
  justify-content: center;
  flex: none;
  gap: 2px;
  padding: 2px 3px 0 2px;
  ${(p) => p.$w && css`width: ${p.$w}px; padding: 2px 0 0;`}
  border-right: 1px solid #5a5a5a;
  background: ${(p) => (p.$on ? 'linear-gradient(#e4f4fa, #a5cfdc 50%, #c3e6f0)' : 'linear-gradient(#c4c4c4, #9c9c9c 50%, #8f8f8f)')};
`;

const Coords = styled.output`
  flex: none;
  width: 140px;
  padding: 2px 0 0 8px;
`;

const Gap = styled.span<{ $w: number }>`
  flex: none;
  width: ${(p) => p.$w}px;
`;

const Right = styled.div`
  display: flex;
  margin-left: auto;
  padding-right: 24px;
  border-left: 1px solid #5a5a5a;
`;

/* ---------- floating pieces ---------- */

const Upload = styled.button`
  position: absolute;
  top: 27px;
  right: 104px;
  display: flex;
  width: 104px;
  height: 24px;
  align-items: center;
  border: 1px solid #4aa3de;
  border-radius: 3px;
  background: linear-gradient(#eaf6fd, #a9d8f5);
  color: #3a72a0;
  overflow: hidden;
  svg { background: #1f93e6; }
  span { flex: 1; text-align: center; }
`;

const Ime = styled.div`
  position: absolute;
  right: 0;
  bottom: 0;
  display: flex;
  align-items: center;
  justify-content: space-around;
  width: 143px;
  height: 19px;
  background: #fafafa;
  border-left: 1px solid #ccc;
  font: 13px/16px "Noto Sans CJK SC", sans-serif;
  color: #444;
`;

const ImeMode = styled.button`
  width: 15px;
  height: 15px;
  border: 1px solid #d05040;
  font-size: 10px;
  line-height: 13px;
  font-weight: 700;
  color: #333;
`;

/* ---------- axis-net drawing ---------- */

const GREEN = '#3ad83a';
const RED = '#c01c1c';
const XS = [450.5, 490.5, 569.5, 648.5, 727.5, 806.5, 885.5, 964.5, 1043.5, 1122.5, 1227.5];
const LEFT: [string, number][] = [['H', 443.5], ['G', 462.5], ['F', 528.5], ['D', 561.5], ['C', 594.5], ['B', 603.5], ['A', 660.5]];
const RIGHT: [string, number][] = [['H', 443.5], ['G', 462.5], ['F', 528.5], ['E', 548.5], ['C', 594.5], ['A', 660.5]];
const ROWS: [number, number, number][] = [
  [443.5, 438, 1240], [462.5, 438, 1240], [528.5, 438, 1240], [548.5, 457, 1240],
  [561.5, 438, 1222], [594.5, 438, 1240], [603.5, 438, 1222], [660.5, 438, 1240],
];
const SPANS = ['3000', '6000', '6000', '6000', '6000', '6000', '6000', '6000', '6000', '8000'];
const LEFT_SPANS = ['1500', '5000', '2500', '2500', '700', '4300'];
const RIGHT_SPANS = ['1500', '5000', '1500', '3500', '5000'];

function Bubble({ x, cy, t }: { x: number; cy: number; t: string }) {
  return (
    <g>
      <circle cx={x} cy={cy} r={5.5} fill="#000" stroke={GREEN} />
      <text x={x} y={cy + 3} fill="#fff" fontSize={t.length > 1 ? 8 : 10} fontFamily="Liberation Serif, serif" fontWeight="700" textAnchor="middle">{t}</text>
    </g>
  );
}

function Dim({ x, cy, t, turn }: { x: number; cy: number; t: string; turn?: boolean }) {
  return (
    <text
      x={x}
      y={cy}
      fill="#fff"
      stroke="#fff"
      strokeWidth=".3"
      fontSize="6"
      fontWeight="700"
      fontFamily="Liberation Sans, sans-serif"
      textAnchor="middle"
      dominantBaseline="central"
      transform={turn ? `rotate(-90 ${x} ${cy})` : undefined}
    >
      {t}
    </text>
  );
}

function Drawing() {
  const mid = (a: number, c: number) => (a + c) / 2;
  return (
    <svg width="100%" height="100%" role="img" aria-label="轴网平面">
      <g transform="translate(-136 -155)">
        <circle cx="631" cy="653" r="29" fill="#0000ff" />
        <g stroke={RED}>
          {ROWS.map(([v, a, c]) => <path key={v} d={`M${a} ${v}H${c}`} />)}
          {XS.map((x) => <path key={x} d={`M${x} 431V673`} />)}
        </g>
        <g stroke="#d020d0">
          <path d="M604 660.500h54M648.500 631v42" />
        </g>
        <g stroke={GREEN} fill="none">
          {XS.map((x) => <path key={x} d={`M${x} 377V431M${x} 673V726`} />)}
          <path d="M450 386.500H1228M450 397.500H1228M450 706.500H1228M450 717.500H1228" />
          <path d="M394.500 443V661M404.500 443V661M1273.500 443V661M1284.500 443V661" />
          {LEFT.map(([t, v]) => <path key={t} d={`M385 ${v}H438`} />)}
          {RIGHT.map(([t, v]) => <path key={t} d={`M1240 ${v}H1293`} />)}
        </g>
        {XS.map((x, i) => (
          <React.Fragment key={x}>
            <Bubble x={x} cy={372} t={`${i + 1}`} />
            <Bubble x={x} cy={731.5} t={`${i + 1}`} />
            {i > 0 && <Dim x={mid(XS[i - 1], x)} cy={393} t={SPANS[i - 1]} />}
            {i > 0 && <Dim x={mid(XS[i - 1], x)} cy={703} t={SPANS[i - 1]} />}
          </React.Fragment>
        ))}
        <Dim x={839} cy={383} t="59000" />
        <Dim x={839} cy={713} t="59000" />
        {LEFT.map(([t, v], i) => (
          <React.Fragment key={t}>
            <Bubble x={379.5} cy={v} t={t} />
            {i > 0 && <Dim x={400} cy={mid(LEFT[i - 1][1], v)} t={LEFT_SPANS[i - 1]} turn />}
          </React.Fragment>
        ))}
        {RIGHT.map(([t, v], i) => (
          <React.Fragment key={t}>
            <Bubble x={1298.5} cy={v} t={t} />
            {i > 0 && <Dim x={1270} cy={mid(RIGHT[i - 1][1], v)} t={RIGHT_SPANS[i - 1]} turn />}
          </React.Fragment>
        ))}
        <Dim x={390} cy={552} t="16500" turn />
        <Dim x={1280} cy={552} t="16500" turn />
        <g stroke="#fff" fill="none">
          <path d="M151.500 897.500h15v15h-15zM159.500 897V831M166 904.500H233" />
          <path d="M159.500 811l-7 20h14zM159.500 813v17M252 904.500l-18.500-7v14zM250 904.500h-16" />
        </g>
        <g fill="#fff" fontFamily="Lato, sans-serif" fontWeight="300" fontSize="27" textAnchor="middle">
          <text x="161.500" y="800">Y</text>
          <text x="272.500" y="914">X</text>
        </g>
      </g>
      <g transform="translate(-136 -155)" fill="none">
        <path d="M631.500 624V682M602 652.500H660" stroke="#101030" strokeWidth="3" />
        <path d="M631.500 0V1200M0 652.500H3000" stroke="#fff" />
        <path d="M631.500 638V668M617 652.500H646" stroke="#ffff70" />
        <path d="M624.500 645.500h14v14h-14z" stroke="#ffffb0" />
      </g>
    </svg>
  );
}

/* ---------- data ---------- */

const MENUS = ['文件(F)', '编辑(E)', '视图(V)', '插入(I)', '格式(O)', '工具(T)', '绘图(D)', '标注(N)', '修改(M)', '参数(P)', '窗口(W)', '帮助(H)'];

const GREEN_GROUPS: [string, string][][] = [
  [['pGrid', '绘制轴网'], ['pWall', '墙生轴网'], ['pAdd', '添加轴线'], ['pTrim', '轴线裁剪'], ['pMerge', '轴网合并'], ['pType', '轴改线型']],
  [['pDim', '轴网标注'], ['pDim1', '单轴标注'], ['pPlus', '添补轴号'], ['pMinus', '删除轴号'], ['pMulti', '一轴多号'], ['pShow', '轴号隐现'], ['pSwap', '主附转换']],
  [['pCol', '标 准 柱'], ['pCorner', '角　　柱'], ['pCorner2', '构 造 柱'], ['pAlign', '柱齐墙边']],
];

const REST = ['墙　　体', '门　　窗', '房间屋顶', '楼梯其他', '立　　面', '剖　　面', '文字表格', '尺寸标注', '符号标注', '图层控制', '工　　具', '三维建模', '图块图案', '文件布图', '其　　它', '帮助演示'];

const DRAW = 'line xline pline polygon rect arc circle cloud spline ellipse ellArc insert block point hatchT gradT region table bigA';
const MODIFY = 'erase copyM mirror offset array moveT rotate scale stretch trim extend breakPt breakT join chamfer fillet explode';

const TOGGLES: [string, boolean][] = [['捕捉', true], ['栅格', false], ['正交', true], ['极轴', false], ['对象捕捉', true], ['对象追踪', false], ['DUCS', false], ['DYN', false], ['线宽', false], ['QP', false]];

function VTools({ names }: { names: string }) {
  return (
    <VBar>
      <Grip $across />
      {names.split(' ').map((t) => <IconButton key={t} $h={22} aria-label={t}><Icon name={t} /></IconButton>)}
    </VBar>
  );
}

export default function App() {
  return (
    <Frame>
      <Global />
      <Header>
        <Logo aria-label="AutoCAD">
          <svg width="25" height="34" viewBox="0 0 25 34" aria-hidden="true">
            <path d="M2 31L9 3l7-1 8 20-3 5-4-5-7 2-1 6z" fill="#b3121b" />
            <path d="M2 31L9 3l4 7-4 14-2 6z" fill="#e8353c" />
            <path d="M9 3l7-1 8 20-5 2z" fill="#d41f2a" />
            <path d="M12 11l3 8-5 1z" fill="#8e8e8e" />
            <path d="M9 3l3 8-2 9 5-1 4 5-8 1-9 6z" fill="#f04a4a" opacity=".5" />
          </svg>
          <Caret $c="#333" />
        </Logo>
        <TitleRow>
          <QuickAccess>
            {['new', 'open', 'save'].map((t) => <IconButton key={t} aria-label={t}><Icon name={t} /></IconButton>)}
            <IconButton $w={32} aria-label="undo"><Icon name="undo" /><Caret $c="#444" /></IconButton>
            <IconButton $w={32} aria-label="redo"><Icon name="redo" /><Caret $c="#777" /></IconButton>
            <IconButton aria-label="print"><Icon name="print" /></IconButton>
            <Caret />
          </QuickAccess>
          <Title>{'天正软件-建筑系统 2014  For AutoCAD 2010         户型.dwg'}</Title>
          <Search>
            <SearchArrow />
            <SearchInput aria-label="搜索" placeholder="鍵入关鍵字或短语" />
            <IconButton aria-label="search"><Icon name="binoc" /></IconButton>
            <Caret $c="#444" />
            <IconButton aria-label="key"><Icon name="key" /></IconButton>
            <IconButton aria-label="center"><Icon name="dish" /></IconButton>
            <IconButton aria-label="favorites"><Icon name="star" /></IconButton>
            <IconButton aria-label="help"><Icon name="qCircle" /></IconButton>
            <Caret $c="#444" />
          </Search>
          <WinButtons>
            <IconButton $w={28} $h={20} aria-label="minimize"><Icon name="wMin" /></IconButton>
            <IconButton $w={28} $h={20} aria-label="maximize"><Icon name="wMax" /></IconButton>
            <IconButton $w={46} $h={20} aria-label="close"><Icon name="wClose" /></IconButton>
          </WinButtons>
        </TitleRow>
        <MenuRow>
          <Menu>{MENUS.map((t) => <button key={t}>{t}</button>)}</Menu>
          <IconButton $w={17} aria-label="minimize drawing"><Icon name="wMin" /></IconButton>
          <IconButton $w={17} aria-label="restore drawing"><Icon name="wRestore" /></IconButton>
          <IconButton $w={17} aria-label="close drawing"><Icon name="wClose" /></IconButton>
        </MenuRow>
      </Header>

      <ToolRows>
        <ToolRow>
          <Bar>
            <Grip $wide />
            <Tools names="new open save | print preview publish globe markup | cut copy paste match blockEdit | undo redo | pan zoom zoomWin zoomPrev | props design toolPal sheetSet markupSet calc | help" />
          </Bar>
          <Bar>
            <Grip />
            <Tools names="textStyle" /><Select label="文字样式" value="Standard" w={120} pad={18} />
            <Sep /><Tools names="dimStyle" /><Select label="标注样式" value="STANDARD" w={120} pad={18} />
            <Sep /><Tools names="tableStyle" /><Select label="表格样式" value="Standard" w={120} pad={4} />
            <Sep /><Tools names="leaderStyle" /><Select label="引线样式" value="Standard" w={120} pad={18} />
          </Bar>
        </ToolRow>
        <ToolRow>
          <Bar>
            <Grip $wide />
            <Select label="工作空间" value="AutoCAD 经典" w={175} pad={8} />
            <Tools names="gear wsSettings" />
          </Bar>
          <Bar>
            <Grip />
            <Tools names="layerProps" />
            <Select label="图层" value="0" w={300} pad={85} font="serif">
              <Icon name="bulb" size={15} /><Icon name="sun" /><Icon name="vpFreeze" /><Icon name="unlock" /><Icon name="swatch" size={15} />
            </Select>
            <Tools names="layerCur layerPrev layerState" />
          </Bar>
          <Bar>
            <Grip />
            <Select label="颜色" value="ByLayer" w={150} pad={18} font="serif"><Icon name="swatch" size={15} /></Select>
            <Sep />
            <Select label="线型" value="ByLayer" w={159} pad={67} font="serif"><LineSample $w={60} /></Select>
            <Sep />
            <Select label="线宽" value="ByLayer" w={126} pad={43} font="serif"><LineSample $w={35} /></Select>
            <Sep />
            <Select label="打印样式" value="BYCOLOR" w={119} pad={8} font="mono" off />
          </Bar>
        </ToolRow>
        <ToolRow>
          <Bar>
            <Grip />
            <Tools names="grid axisDim axisDel axisNo | wallH wallLine wallL wallGap door column | ziBrush zi ziLines | dim1 dim2 dim3 radius angle arcDim | replace moveRed moveBlue pasteBlue" />
          </Bar>
          <Bar>
            <Grip />
            <Tools names="lay layCycle | bulbOff bulbSheet bulbOn bulbAll flake flakeSheet sun lockB lockSheet lockY layPrev layDown layEdit" />
          </Bar>
          <Bar>
            <Grip />
            <Tools names="handCard findDoc | win1 win2 | leaderC leaderBox leaderAB level arrowA section elev abText | plan hatch lampBlock house | eyeRed pencil eye | fourGrid frame ruler" />
          </Bar>
        </ToolRow>
      </ToolRows>

      <Body>
        <Palette>
          <PaletteHead><HeadGrip />天正...</PaletteHead>
          <PaletteStrip />
          <PaletteBody>
            <Group $kind="top">
              <PaletteRow><Mark />设　　置</PaletteRow>
              <PaletteRow><Mark $open />轴网柱子</PaletteRow>
            </Group>
            {GREEN_GROUPS.map((rows, i) => (
              <Group $kind="green" key={i}>
                {rows.map(([ic, t]) => <PaletteRow key={t}><Icon name={ic} />{t}</PaletteRow>)}
              </Group>
            ))}
            <Group $kind="rest">
              {REST.map((t) => <PaletteRow key={t}><Mark />{t}</PaletteRow>)}
            </Group>
          </PaletteBody>
        </Palette>

        <Work>
          <Upper>
            <VTools names={DRAW} />
            <Doc>
              <DocTabs>
                <DocTab>平泉蘑菇厂</DocTab>
                <DocTab>作业<Latin>CAD</Latin></DocTab>
                <DocTab $on>户型</DocTab>
                <DocTab>总平面布置图<Latin>1219</Latin></DocTab>
              </DocTabs>
              <CanvasRow>
                <Canvas><Drawing /></Canvas>
                <VScroll $w={19}>
                  <Arrow $d="up" aria-label="scroll up" />
                  <Stack><Thumb /><Arrow $d="down" aria-label="scroll down" /></Stack>
                </VScroll>
              </CanvasRow>
              <LayoutBar>
                <NavButton aria-label="first"><Stop /><Arrow as="i" $d="left" /></NavButton>
                <NavButton aria-label="previous"><Arrow as="i" $d="left" /></NavButton>
                <NavButton aria-label="next"><Arrow as="i" $d="right" /></NavButton>
                <NavButton aria-label="last"><Arrow as="i" $d="right" /><Stop /></NavButton>
                <LayoutTab $on>模型</LayoutTab>
                <LayoutTab>布局<Latin>1</Latin></LayoutTab>
                <LayoutTab>布局<Latin>2</Latin></LayoutTab>
                <HTrack>
                  <Arrow $d="left" aria-label="scroll left" />
                  <Thumb />
                  <Arrow $d="right" aria-label="scroll right" />
                </HTrack>
              </LayoutBar>
            </Doc>
            <VColumn>
              <VTools names={MODIFY} />
              <VTools names="order1 order2 order3 order4" />
            </VColumn>
          </Upper>

          <Command>
            <CommandGrip />
            <CommandMain>
              <History>
                <HistoryText>
                  <p>请选择不需要标注的轴线<Half>:</Half></p>
                  <p>请选择起始轴线<Half>&lt;</Half>退出<Half>&gt;:</Half></p>
                </HistoryText>
                <VScroll $w={17}>
                  <Arrow $d="up" aria-label="history up" />
                  <Arrow $d="down" aria-label="history down" />
                </VScroll>
              </History>
              <PromptRow>
                <Prompt>命令<Half>:</Half><input /></Prompt>
                <PromptScroll>
                  <Arrow $d="left" aria-label="prompt left" /><Thumb /><Arrow $d="right" aria-label="prompt right" />
                </PromptScroll>
              </PromptRow>
            </CommandMain>
          </Command>
        </Work>
      </Body>

      <Status>
        <StatusButton $w={81}>比例<Gap $w={2} /><Latin>1:100</Latin><Gap $w={2} /><Caret /></StatusButton>
        <Coords><Latin>171521, -11287, 0</Latin></Coords>
        {TOGGLES.map(([t, on]) => (
          <StatusButton key={t} $on={on}>{/^[A-Z]/.test(t) ? <Latin>{t}</Latin> : t}</StatusButton>
        ))}
        <Right>
          <StatusButton $w={31}>模型</StatusButton>
          <StatusButton $w={22} aria-label="model"><Icon name="sbModel" /></StatusButton>
          <StatusButton $w={22} aria-label="layout"><Icon name="sbLayout" /></StatusButton>
          <Gap $w={18} />
          {['pan', 'zoom', 'wheel', 'motion'].map((t) => <StatusButton key={t} $w={22} aria-label={t}><Icon name={t} /></StatusButton>)}
          <Gap $w={18} />
          <StatusButton $w={54}><Icon name="annot" /><Latin>1:1</Latin><Caret /></StatusButton>
          <StatusButton $w={22} aria-label="annotation visibility"><Icon name="annotOn" /></StatusButton>
          <StatusButton $w={22} aria-label="auto scale"><Icon name="annotOff" /></StatusButton>
          <Gap $w={6} />
          <StatusButton $w={107}><Icon name="gear" /><Latin>AutoCAD</Latin> 经典<Caret /></StatusButton>
          <StatusButton $w={22} aria-label="lock"><Icon name="sbLock" /></StatusButton>
          {['编组', '基线', '填充', '加粗'].map((t) => <StatusButton key={t} $w={30}>{t}</StatusButton>)}
          <StatusButton $w={56}>动态标注</StatusButton>
          <StatusButton $w={30} $on aria-label="tray"><Icon name="layEdit" /></StatusButton>
          <StatusButton $w={30} aria-label="clean screen"><Icon name="props" /></StatusButton>
        </Right>
      </Status>

      <Upload>
        <svg width="30" height="24" viewBox="0 0 30 24" aria-hidden="true">
          <g fill="none" stroke="#fff" strokeWidth="3">
            <circle cx="15" cy="7" r="4" /><circle cx="10" cy="14" r="4" /><circle cx="20" cy="14" r="4" />
          </g>
        </svg>
        <span>拖拽上传</span>
      </Upload>

      <Ime>
        <ImeMode>五</ImeMode>
        <span>中</span>
        <Icon name="moon" size={15} />
        <span>°,</span>
        <Icon name="keyboard" />
        <Icon name="user" size={15} />
        <Icon name="wrench" size={15} />
      </Ime>
    </Frame>
  );
}
